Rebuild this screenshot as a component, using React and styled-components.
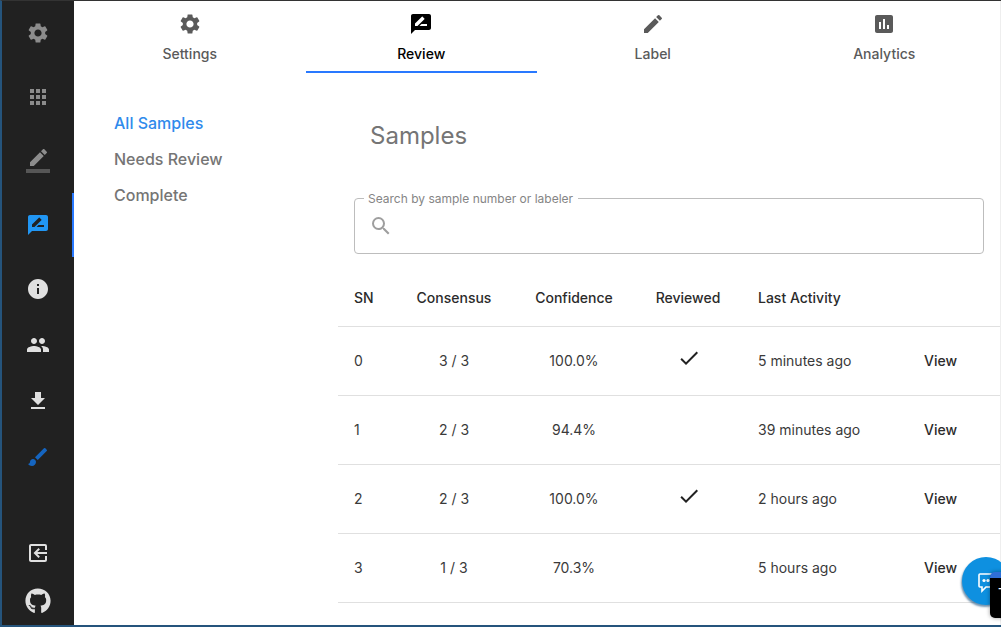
import { createGlobalStyle } from 'styled-components';
import styled from 'styled-components';
import {
  MdSettings, MdApps, MdRateReview, MdInfo, MdPeople, MdGetApp, MdBrush,
  MdExitToApp, MdEdit, MdAssessment, MdSearch, MdCheck,
} from 'react-icons/md';
import { FaGithub } from 'react-icons/fa';

const Global = createGlobalStyle`
  html, body { margin: 0; padding: 0; height: 100%; background: #fff; overflow: hidden; }
  body { font-family: Inter, "Liberation Sans", sans-serif; }
  #root { height: 100%; }
`;

const Page = styled.div`
  position: relative;
  height: 627px;
  box-sizing: border-box;
  border-top: 1px solid #333;
  border-left: 2px solid #25547c;
  border-bottom: 2px solid #25547c;
  display: flex;
  overflow: hidden;
`;

const Sidebar = styled.nav`
  width: 72px;
  flex: none;
  background: #212121;
  display: flex;
  flex-direction: column;
  align-items: stretch;
`;

const SideItem = styled.div`
  height: ${p => p.$h}px;
  flex: none;
  display: flex;
  align-items: center;
  justify-content: center;
  box-sizing: border-box;
  padding-left: 1px;
  color: ${p => p.$color || '#e0e0e0'};
  border-right: 2px solid ${p => (p.$active ? '#2979ff' : 'transparent')};
  font-size: ${p => p.$size || 24}px;
`;

const SideSpacer = styled.div`
  flex: 1;
`;

const MirroredIcon = styled(MdExitToApp)`
  transform: scaleX(-1);
`;

const Main = styled.div`
  flex: 1;
  min-width: 0;
  display: flex;
  flex-direction: column;
  border-right: 1px solid #eee;
`;

const Tabs = styled.div`
  display: flex;
  height: 72px;
  flex: none;
`;

const Tab = styled.div`
  flex: 1;
  box-sizing: border-box;
  display: flex;
  flex-direction: column;
  align-items: center;
  padding-top: 11px;
  gap: 9px;
  font-size: 14px;
  font-weight: 500;
  color: ${p => (p.$active ? '#000' : '#5a5a5a')};
  border-bottom: 2px solid ${p => (p.$active ? '#2979ff' : 'transparent')};
  svg { font-size: 24px; }
`;

const Body = styled.div`
  flex: 1;
  display: flex;
  min-height: 0;
`;

const SideNav = styled.div`
  width: 264px;
  flex: none;
  padding: 40px 0 0 40px;
  box-sizing: border-box;
  display: flex;
  flex-direction: column;
  gap: 15px;
`;

const NavLink = styled.div`
  font-size: 16px;
  font-weight: 500;
  line-height: 21px;
  color: ${p => (p.$active ? '#2f8aec' : '#757575')};
`;

const Content = styled.div`
  flex: 1;
  min-width: 0;
`;

const Title = styled.h1`
  margin: 0;
  padding: 47px 0 0 32px;
  font-size: 24px;
  font-weight: 400;
  line-height: 32px;
  color: #757575;
`;

const SearchBox = styled.fieldset`
  margin: 39px 16px 0;
  padding: 0 0 0 14px;
  height: 63px;
  box-sizing: border-box;
  border: 1px solid #bdbdbd;
  border-radius: 4px;
  display: flex;
  align-items: center;
  color: #9e9e9e;
  legend {
    font-size: 12px;
    line-height: 14px;
    padding: 0 5px 0 4px;
    margin-left: -5px;
    color: #858585;
    transform: translateY(1px);
  }
  svg { font-size: 24px; margin-top: -7px; }
`;

const Row = styled.div`
  display: grid;
  grid-template-columns: 63px 106px 134px 94px 173px 1fr;
  height: ${p => p.$h}px;
  box-sizing: border-box;
  align-items: center;
  padding: ${p => (p.$head ? '14px 0 0' : '0 0 2px')};
  border-bottom: 1px solid #e0e0e0;
  font-size: 14px;
  font-weight: ${p => (p.$head ? 500 : 400)};
  color: ${p => (p.$head ? '#2b2b2b' : '#3a3a3a')};
`;

const Cell = styled.div`
  text-align: ${p => p.$align || 'center'};
  padding-left: ${p => p.$pad || 0}px;
  display: flex;
  justify-content: ${p => (p.$align === 'left' ? 'flex-start' : 'center')};
  svg { font-size: 24px; color: #212121; margin: -4px 0 0 1px; }
`;

const ViewLink = styled.span`
  font-weight: 500;
  color: #2b2b2b;
`;

const ChatButton = styled.div`
  position: absolute;
  left: 960px;
  top: 556px;
  width: 48px;
  height: 48px;
  border-radius: 50%;
  background: #0e90e0;
  box-shadow: -1px 2px 2px rgba(0, 60, 110, 0.55);
  color: #fff;
`;

const ChatIcon = styled.svg`
  position: absolute;
  left: 15px;
  top: 16px;
`;

const ChatPopup = styled.div`
  position: absolute;
  left: 988px;
  top: 571px;
  width: 30px;
  height: 46px;
  border-radius: 5px;
  background: #000;
  box-shadow: 0 0 4px rgba(0, 0, 0, 0.4);
  border-top: 6px solid #2f6fd6;
  box-sizing: border-box;
  color: #fff;
  font-size: 14px;
  padding: 7px 0 0 8px;
`;

const samples = [
  { sn: 0, cons: '3 / 3', conf: '100.0%', done: true, last: '5 minutes ago' },
  { sn: 1, cons: '2 / 3', conf: '94.4%', done: false, last: '39 minutes ago' },
  { sn: 2, cons: '2 / 3', conf: '100.0%', done: true, last: '2 hours ago' },
  { sn: 3, cons: '1 / 3', conf: '70.3%', done: false, last: '5 hours ago' },
];

function PencilBarIcon() {
  return (
    <svg width="24" height="24" viewBox="0 0 24 24" fill="currentColor">
      <path d="M17.75 7L14 3.25l-10 10V17h3.75l10-10zm2.96-2.96c.39-.39.39-1.02 0-1.41L18.37.29c-.39-.39-1.02-.39-1.41 0L15 2.25 18.75 6l1.96-1.96z" />
      <path fillOpacity=".5" d="M0 20h24v4H0z" />
    </svg>
  );
}

export default function App() {
  return (
    <Page>
      <Global />
      <Sidebar>
        <SideItem $h={64} $color="#8c8c8c"><MdSettings /></SideItem>
        <SideItem $h={64} $color="#8c8c8c"><MdApps /></SideItem>
        <SideItem $h={64} $color="#8c8c8c"><PencilBarIcon /></SideItem>
        <SideItem $h={64} $color="#2196f3" $active><MdRateReview /></SideItem>
        <SideItem $h={64}><MdInfo /></SideItem>
        <SideItem $h={48}><MdPeople /></SideItem>
        <SideItem $h={64}><MdGetApp /></SideItem>
        <SideItem $h={48} $color="#1565c0"><MdBrush /></SideItem>
        <SideSpacer />
        <SideItem $h={48}><MirroredIcon /></SideItem>
        <SideItem $h={48} $size={26}><FaGithub /></SideItem>
      </Sidebar>
      <Main>
        <Tabs>
          <Tab><MdSettings />Settings</Tab>
          <Tab $active><MdRateReview />Review</Tab>
          <Tab><MdEdit />Label</Tab>
          <Tab><MdAssessment />Analytics</Tab>
        </Tabs>
        <Body>
          <SideNav>
            <NavLink $active>All Samples</NavLink>
            <NavLink>Needs Review</NavLink>
            <NavLink>Complete</NavLink>
          </SideNav>
          <Content>
            <Title>Samples</Title>
            <SearchBox>
              <legend>Search by sample number or labeler</legend>
              <MdSearch />
            </SearchBox>
            <Row $head $h={73}>
              <Cell $align="left" $pad={16}>SN</Cell>
              <Cell>Consensus</Cell>
              <Cell>Confidence</Cell>
              <Cell>Reviewed</Cell>
              <Cell $align="left" $pad={23}>Last Activity</Cell>
              <Cell />
            </Row>
            {samples.map(s => (
              <Row key={s.sn} $h={69}>
                <Cell $align="left" $pad={16}>{s.sn}</Cell>
                <Cell>{s.cons}</Cell>
                <Cell>{s.conf}</Cell>
                <Cell>{s.done && <MdCheck />}</Cell>
                <Cell $align="left" $pad={23}>{s.last}</Cell>
                <Cell $align="left" $pad={16}><ViewLink>View</ViewLink></Cell>
              </Row>
            ))}
          </Content>
        </Body>
      </Main>
      <ChatButton>
        <ChatIcon width="24" height="20" viewBox="0 0 24 20" fill="none">
          <path d="M3 1h18a1 1 0 0 1 1 1v11a1 1 0 0 1-1 1H9l-4 4v-4H3a1 1 0 0 1-1-1V2a1 1 0 0 1 1-1z" stroke="#fff" strokeWidth="1.6" />
          <circle cx="7" cy="7.5" r="1.6" fill="#fff" />
          <circle cx="11" cy="7.5" r="1.6" fill="#fff" />
          <circle cx="15" cy="7.5" r="1.6" fill="#fff" />
        </ChatIcon>
      </ChatButton>
      <ChatPopup>T</ChatPopup>
    </Page>
  );
}
